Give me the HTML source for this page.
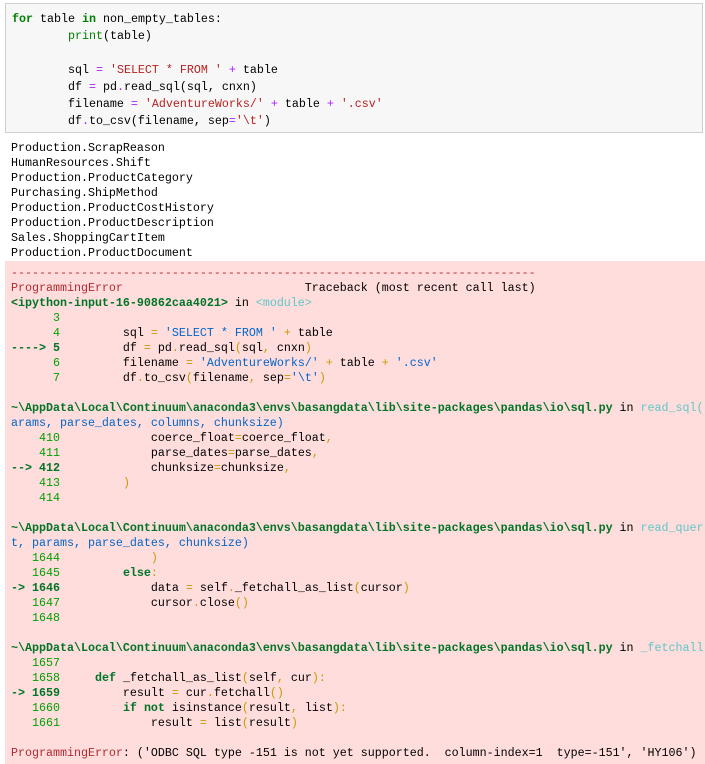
<!DOCTYPE html>
<html><head><meta charset="utf-8"><style>
body{margin:0;width:705px;height:764px;background:#fff;overflow:hidden;font-family:"Liberation Mono",monospace;font-size:11.67px}
pre{margin:0;font-family:inherit;font-size:inherit;white-space:pre}
.cell{position:absolute;left:5px;top:3px;width:698px;height:130px;background:#f7f7f7;border:1px solid #cfcfcf;box-sizing:border-box}
.cell pre{position:absolute;left:6px;top:7px;line-height:17px;color:#000}
.out{position:absolute;left:11px;top:141px;line-height:15px;color:#000}
.err{position:absolute;left:5px;top:261px;width:700px;height:503px;background:#fdd}
.err pre{position:absolute;left:6px;top:5px;line-height:15px;color:#000}
.k{color:#008000;font-weight:bold}.b{color:#008000}.s{color:#ba2121}.o{color:#aa22ff}.f{color:#0000ff}
.r{color:#b22b31}.g{color:#00a000}.gb{color:#007427;font-weight:bold}.c{color:#60c6c8}.bl{color:#0065ca}.y{color:#c89b00}
.ts{color:#0065ca}.tk{color:#007427;font-weight:bold}
</style></head><body>
<div class="cell"><pre><span class="k">for</span> table <span class="k">in</span> non_empty_tables:
        <span class="b">print</span>(table)

        sql <span class="o">=</span> <span class="s">'SELECT * FROM '</span> <span class="o">+</span> table
        df <span class="o">=</span> pd<span class="o">.</span>read_sql(sql, cnxn)
        filename <span class="o">=</span> <span class="s">'AdventureWorks/'</span> <span class="o">+</span> table <span class="o">+</span> <span class="s">'.csv'</span>
        df<span class="o">.</span>to_csv(filename, sep<span class="o">=</span><span class="s">'\t'</span>)</pre></div>
<pre class="out">Production.ScrapReason
HumanResources.Shift
Production.ProductCategory
Purchasing.ShipMethod
Production.ProductCostHistory
Production.ProductDescription
Sales.ShoppingCartItem
Production.ProductDocument</pre>
<div class="err"><pre><span class="r">---------------------------------------------------------------------------</span>
<span class="r">ProgrammingError</span>                          Traceback (most recent call last)
<span class="tk">&lt;ipython-input-16-90862caa4021&gt;</span> in <span class="c">&lt;module&gt;</span>
<span class="g">      3</span> 
<span class="g">      4</span>         sql <span class="y">=</span> <span class="ts">'SELECT * FROM '</span> <span class="y">+</span> table
<span class="gb">----&gt; 5</span>         df <span class="y">=</span> pd<span class="y">.</span>read_sql<span class="y">(</span>sql<span class="y">,</span> cnxn<span class="y">)</span>
<span class="g">      6</span>         filename <span class="y">=</span> <span class="ts">'AdventureWorks/'</span> <span class="y">+</span> table <span class="y">+</span> <span class="ts">'.csv'</span>
<span class="g">      7</span>         df<span class="y">.</span>to_csv<span class="y">(</span>filename<span class="y">,</span> sep<span class="y">=</span><span class="ts">'\t'</span><span class="y">)</span>

<span class="tk">~\AppData\Local\Continuum\anaconda3\envs\basangdata\lib\site-packages\pandas\io\sql.py</span> in <span class="c">read_sql(</span>
<span class="bl">arams, parse_dates, columns, chunksize)</span>
<span class="g">    410</span>             coerce_float<span class="y">=</span>coerce_float<span class="y">,</span>
<span class="g">    411</span>             parse_dates<span class="y">=</span>parse_dates<span class="y">,</span>
<span class="gb">--&gt; 412</span>             chunksize<span class="y">=</span>chunksize<span class="y">,</span>
<span class="g">    413</span>         <span class="y">)</span>
<span class="g">    414</span> 

<span class="tk">~\AppData\Local\Continuum\anaconda3\envs\basangdata\lib\site-packages\pandas\io\sql.py</span> in <span class="c">read_quer</span>
<span class="bl">t, params, parse_dates, chunksize)</span>
<span class="g">   1644</span>             <span class="y">)</span>
<span class="g">   1645</span>         <span class="tk">else</span><span class="y">:</span>
<span class="gb">-&gt; 1646</span>             data <span class="y">=</span> self<span class="y">.</span>_fetchall_as_list<span class="y">(</span>cursor<span class="y">)</span>
<span class="g">   1647</span>             cursor<span class="y">.</span>close<span class="y">()</span>
<span class="g">   1648</span> 

<span class="tk">~\AppData\Local\Continuum\anaconda3\envs\basangdata\lib\site-packages\pandas\io\sql.py</span> in <span class="c">_fetchall</span>
<span class="g">   1657</span> 
<span class="g">   1658</span>     <span class="tk">def</span> _fetchall_as_list<span class="y">(</span>self<span class="y">,</span> cur<span class="y">):</span>
<span class="gb">-&gt; 1659</span>         result <span class="y">=</span> cur<span class="y">.</span>fetchall<span class="y">()</span>
<span class="g">   1660</span>         <span class="tk">if</span> <span class="tk">not</span> isinstance<span class="y">(</span>result<span class="y">,</span> list<span class="y">):</span>
<span class="g">   1661</span>             result <span class="y">=</span> list<span class="y">(</span>result<span class="y">)</span>

<span class="r">ProgrammingError</span>: ('ODBC SQL type -151 is not yet supported.  column-index=1  type=-151', 'HY106')</pre></div>
</body></html>
